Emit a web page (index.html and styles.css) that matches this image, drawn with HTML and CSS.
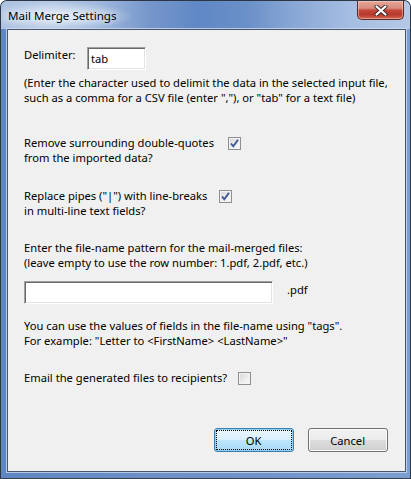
FILE: index.html
```html
<!DOCTYPE html>
<html>
<head>
<meta charset="utf-8">
<title>Mail Merge Settings</title>
<link rel="stylesheet" href="styles.css">
</head>
<body>
<div class="window">
  <div class="titlebar">
    <span class="title">Mail Merge Settings</span>
    <div class="close">
      <svg width="14" height="11" viewBox="0 0 14 11">
        <path d="M2.5 1.5 L11.5 9.5 M11.5 1.5 L2.5 9.5" stroke="#3a2a2a" stroke-width="4" stroke-linecap="round"/>
        <path d="M2.5 1.5 L11.5 9.5 M11.5 1.5 L2.5 9.5" stroke="#ffffff" stroke-width="2.2" stroke-linecap="round"/>
      </svg>
    </div>
  </div>
  <div class="frame">
    <div class="client">
      <div class="delim-row">
        <span class="delim-label">Delimiter:</span>
        <div class="textbox delim-box">tab</div>
      </div>
      <p class="para p-delim">(Enter the character used to delimit the data in the selected input file,<br>such as a comma for a CSV file (enter ","), or "tab" for a text file)</p>
      <div class="check-row r-quotes">
        <span class="check-label w-quotes">Remove surrounding double-quotes<br>from the imported data?</span>
        <span class="checkbox"><svg width="11" height="11" viewBox="0 0 11 11"><path d="M2 5.5 L4.3 8.3 L9 1.8" fill="none" stroke="#3e5694" stroke-width="1.9"/></svg></span>
      </div>
      <div class="check-row r-pipes">
        <span class="check-label w-pipes">Replace pipes ("|") with line-breaks<br>in multi-line text fields?</span>
        <span class="checkbox"><svg width="11" height="11" viewBox="0 0 11 11"><path d="M2 5.5 L4.3 8.3 L9 1.8" fill="none" stroke="#3e5694" stroke-width="1.9"/></svg></span>
      </div>
      <p class="para p-pattern">Enter the file-name pattern for the mail-merged files:<br>(leave empty to use the row number: 1.pdf, 2.pdf, etc.)</p>
      <div class="name-row">
        <div class="textbox name-box"></div>
        <span class="ext">.pdf</span>
      </div>
      <p class="para p-tags">You can use the values of fields in the file-name using "tags".<br>For example: "Letter to &lt;FirstName&gt; &lt;LastName&gt;"</p>
      <div class="check-row r-email">
        <span class="check-label w-email">Email the generated files to recipients?</span>
        <span class="checkbox"></span>
      </div>
      <div class="buttons">
        <div class="btn btn-default"><span class="focus">OK</span></div>
        <div class="btn"><span class="nofocus">Cancel</span></div>
      </div>
    </div>
  </div>
</div>
</body>
</html>
```

FILE: styles.css
```css
* { box-sizing: border-box; }
html, body { margin: 0; padding: 0; }
body {
  width: 411px;
  height: 479px;
  overflow: hidden;
  background: #ffffff;
  font-family: "Noto Sans", "Open Sans", sans-serif;
  font-size: 11.2px;
  line-height: 15px;
  color: #000;
}
.window {
  width: 411px;
  height: 479px;
  border: 1px solid #2e3644;
  border-bottom-color: #3a4250;
  border-radius: 7px 7px 0 0;
  display: flex;
  flex-direction: column;
  overflow: hidden;
  background: #6a8ec7;
}
.titlebar {
  height: 28px;
  flex: none;
  display: flex;
  justify-content: space-between;
  align-items: flex-start;
  padding: 0 6px 0 7px;
  background:
    radial-gradient(ellipse 75px 14px at 58px 15px, rgba(235,242,250,0.95), rgba(235,242,250,0) 100%),
    linear-gradient(90deg, #aec3e1 0%, #b5c8e4 12%, #9fb8dd 24%, #7797cb 36%, #6088c5 48%, #6a90c8 60%, #8aa8d6 72%, #a6bee2 86%, #b5c9e6 100%);
}
.title {
  padding-top: 7px;
  font-size: 11.6px;
  color: #000;
  text-shadow: 0 0 6px rgba(255,255,255,0.9);
}
.close {
  width: 47px;
  height: 19px;
  display: flex;
  align-items: center;
  justify-content: center;
  border: 1px solid #5a2c27;
  border-top: none;
  border-radius: 0 0 5px 5px;
  background: linear-gradient(180deg, #e6a899 0%, #d9897a 40%, #c4483a 52%, #b7382c 75%, #d4684f 100%);
  box-shadow: inset 0 0 0 1px rgba(255,225,215,0.45);
}
.close svg { display: block; margin-top: 1px; }
.frame {
  flex: 1;
  display: flex;
  padding: 0 6px 6px;
  background: linear-gradient(90deg, #5f85c2 0%, #6d90c8 40%, #6f92c9 60%, #7d9ed0 100%);
}
.client {
  flex: 1;
  display: flex;
  flex-direction: column;
  background: #f0f0f0;
  border: 1px solid #47566c;
  box-shadow: 0 0 0 1px rgba(210,222,240,0.75);
  padding: 0 17px 0 16px;
}
.para { margin: 0; white-space: nowrap; }
.delim-row { display: flex; margin-top: 17px; height: 23px; }
.delim-label { width: 63px; margin-top: 0px; }
.textbox {
  height: 23px;
  background: #fff;
  border: 1px solid;
  border-color: #a0a0a0 #ffffff #ffffff #a0a0a0;
  box-shadow: inset 1px 1px 0 #696969, inset -1px -1px 0 #e3e3e3;
  padding: 3px 3px;
}
.delim-box { width: 59px; padding-left: 3px; }
.p-delim { margin-top: 5px; }
.check-row { display: flex; align-items: flex-start; }
.check-label { white-space: nowrap; }
.w-quotes { width: 204px; }
.w-pipes { width: 195px; }
.w-email { width: 214px; }
.r-quotes { margin-top: 30px; }
.r-pipes { margin-top: 23px; }
.p-pattern { margin-top: 22px; }
.name-row { display: flex; margin-top: 11px; }
.name-box { width: 249px; }
.ext { margin-left: 14px; margin-top: 1px; }
.p-tags { margin-top: 14px; }
.r-email { margin-top: 22px; }
.checkbox {
  width: 13px;
  height: 13px;
  margin-top: 2px;
  border: 1px solid #8e8f8f;
  background: linear-gradient(135deg, #d4d6d9 0%, #eeeeee 60%, #fbfbfb 100%);
  box-shadow: inset 0 0 0 1px #f3f3f3;
  display: flex;
  align-items: center;
  justify-content: center;
}
.checkbox svg { display: block; }
.buttons {
  display: flex;
  justify-content: flex-end;
  gap: 14px;
  margin-top: 43px;
}
.btn {
  width: 80px;
  height: 24px;
  border: 1px solid #707070;
  border-radius: 3px;
  padding: 1px;
  display: flex;
  background: linear-gradient(180deg, #f2f2f2 0%, #ebebeb 48%, #dddddd 52%, #cfcfcf 100%);
  box-shadow: inset 0 0 0 1px #fbfbfb;
}
.btn-default {
  border-color: #3c7fb1;
  background: linear-gradient(180deg, #eaf6fd 0%, #d9f0fc 48%, #bee6fd 52%, #a7d9f5 100%);
  box-shadow: inset 0 0 0 1px #8fd0f0;
}
.focus, .nofocus {
  flex: 1;
  display: flex;
  align-items: center;
  justify-content: center;
  border: 1px dotted transparent;
}
.focus { border-color: #000; }
```
